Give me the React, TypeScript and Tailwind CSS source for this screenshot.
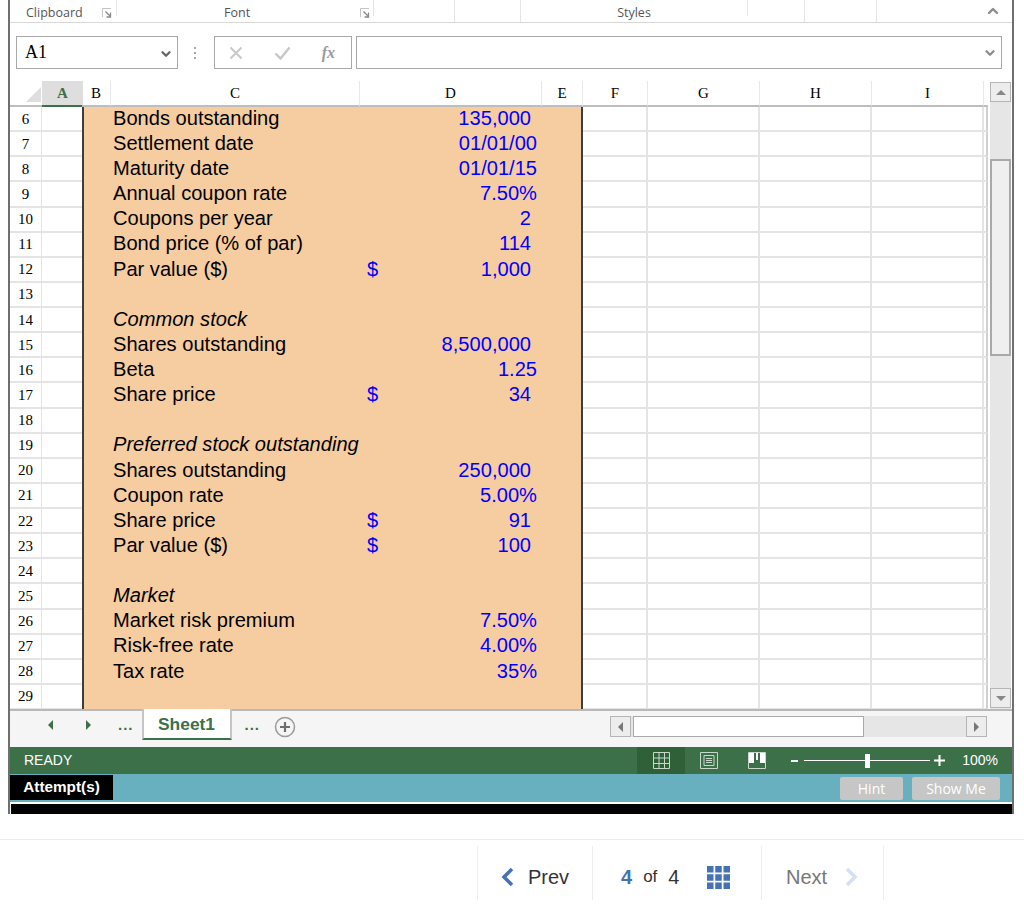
import { ChevronDown, ChevronUp } from "lucide-react";

type Row = {
  n: number;
  label?: string;
  italic?: boolean;
  value?: string;
  dollar?: boolean;
  flush?: boolean;
};

const rows: Row[] = [
  { n: 6, label: "Bonds outstanding", value: "135,000" },
  { n: 7, label: "Settlement date", value: "01/01/00", flush: true },
  { n: 8, label: "Maturity date", value: "01/01/15", flush: true },
  { n: 9, label: "Annual coupon rate", value: "7.50%", flush: true },
  { n: 10, label: "Coupons per year", value: "2" },
  { n: 11, label: "Bond price (% of par)", value: "114" },
  { n: 12, label: "Par value ($)", value: "1,000", dollar: true },
  { n: 13 },
  { n: 14, label: "Common stock", italic: true },
  { n: 15, label: "Shares outstanding", value: "8,500,000" },
  { n: 16, label: "Beta", value: "1.25", flush: true },
  { n: 17, label: "Share price", value: "34", dollar: true },
  { n: 18 },
  { n: 19, label: "Preferred stock outstanding", italic: true },
  { n: 20, label: "Shares outstanding", value: "250,000" },
  { n: 21, label: "Coupon rate", value: "5.00%", flush: true },
  { n: 22, label: "Share price", value: "91", dollar: true },
  { n: 23, label: "Par value ($)", value: "100", dollar: true },
  { n: 24 },
  { n: 25, label: "Market", italic: true },
  { n: 26, label: "Market risk premium", value: "7.50%", flush: true },
  { n: 27, label: "Risk-free rate", value: "4.00%", flush: true },
  { n: 28, label: "Tax rate", value: "35%", flush: true },
  { n: 29 },
];

const cols = "grid grid-cols-[32px_40px_29px_249px_182px_41px_65px_112px_112px_112px_4px]";
const serif = "font-['Liberation_Serif',serif]";
const openSans = "font-['Open_Sans',sans-serif]";

function Launcher() {
  return (
    <svg width="10" height="10" viewBox="0 0 10 10" className="shrink-0">
      <path d="M.5 9V.5H9" fill="none" stroke="#c4c4c4" strokeWidth="1" />
      <path d="M3.500 3.500L8 8M8.500 4.500v4.500H4.500" fill="none" stroke="#8a8a8a" strokeWidth="1.300" />
    </svg>
  );
}

function Triangle({ dir, color }: { dir: "up" | "down" | "left" | "right"; color: string }) {
  const points = {
    up: "0,6 5,1 10,6",
    down: "0,1 10,1 5,6",
    left: "6,0 6,10 1,5",
    right: "1,0 1,10 6,5",
  }[dir];
  const vertical = dir === "up" || dir === "down";
  return (
    <svg width={vertical ? 10 : 7} height={vertical ? 7 : 10} viewBox={vertical ? "0 0 10 7" : "0 0 7 10"}>
      <polygon points={points} fill={color} />
    </svg>
  );
}

function Ribbon() {
  return (
    <div className={`flex h-[23px] border-b border-[#d8d8d8] text-[12.500px] text-[#555] ${openSans}`}>
      <div className="mb-[6px] flex w-[107px] items-center border-r border-[#e4e4e4] pl-[16px]">
        <span className="mt-[10px]">Clipboard</span>
        <span className="ml-[19px] mt-[10px]"><Launcher /></span>
      </div>
      <div className="mb-[6px] flex w-[257px] items-center border-r border-[#e4e4e4] pl-[107px]">
        <span className="mt-[10px]">Font</span>
        <span className="ml-[110px] mt-[10px]"><Launcher /></span>
      </div>
      <div className="w-[81px] border-r border-[#e4e4e4]" />
      <div className="w-[66px] border-r border-[#e4e4e4]" />
      <div className="mb-[6px] flex w-[227px] items-center justify-center border-r border-[#e4e4e4]">
        <span className="mt-[10px]">Styles</span>
      </div>
      <div className="w-[57px] border-r border-[#e4e4e4]" />
      <div className="w-[72px] border-r border-[#e4e4e4]" />
      <div className="flex flex-1 items-center justify-end pr-[11px]">
        <ChevronUp size={16} strokeWidth={3.500} color="#8c8c8c" />
      </div>
    </div>
  );
}

function FormulaBar() {
  return (
    <div className="flex h-[58px] items-start pt-[13px] pl-[6px]">
      <div className={`flex h-[33px] w-[162px] items-center justify-between border border-[#a9a9a9] pl-[8px] pr-[4px] text-[18px] text-black ${serif}`}>
        <span>A1</span>
        <ChevronDown size={14} strokeWidth={4} color="#666" className="mt-[3px]" />
      </div>
      <div className="ml-[16px] mr-[18px] flex h-[33px] flex-col items-center justify-center gap-[3px]">
        <span className="h-[2px] w-[2px] bg-[#aaa]" />
        <span className="h-[2px] w-[2px] bg-[#aaa]" />
        <span className="h-[2px] w-[2px] bg-[#aaa]" />
      </div>
      <div className="flex h-[33px] w-[138px] items-center justify-between border border-[#a9a9a9] pl-[14px] pr-[16px]">
        <svg width="14" height="14" viewBox="0 0 14 14">
          <path d="M1.500 1.500l11 11M12.500 1.500l-11 11" stroke="#c8c8c8" strokeWidth="2" fill="none" />
        </svg>
        <svg width="17" height="14" viewBox="0 0 17 14">
          <path d="M1.500 7.500l5 5 9-11" stroke="#c8c8c8" strokeWidth="2.400" fill="none" />
        </svg>
        <span className={`text-[16px] font-bold italic text-[#9a9a9a] ${serif}`}>fx</span>
      </div>
      <div className="ml-[4px] flex h-[33px] w-[646px] items-center justify-end border border-[#a9a9a9] pr-[4px]">
        <ChevronDown size={14} strokeWidth={4} color="#8c8c8c" />
      </div>
    </div>
  );
}

function ColumnHeaders() {
  const heads = ["B", "C", "D", "E", "F", "G", "H", "I"];
  return (
    <div className={`${cols} h-[26px] w-[978px] ${serif} text-[15px] text-black`}>
      <div className="flex items-end justify-end border-b-2 border-[#bdbdbd] pb-[3px] pr-[1px]">
        <svg width="15" height="15" viewBox="0 0 15 15">
          <polygon points="15,0 15,15 0,15" fill="#dedede" />
        </svg>
      </div>
      <div className="mr-[-1px] flex items-center justify-center border-b-2 border-[#3c7049] bg-[#dedede] font-bold text-[#3c7049]">A</div>
      {heads.map((h) => (
        <div key={h} className="flex items-center justify-center border-b-2 border-[#bdbdbd] border-r border-r-[#e8e8e8]">
          {h}
        </div>
      ))}
      <div className="border-b-2 border-[#bdbdbd]" />
    </div>
  );
}

function SheetRow({ row }: { row: Row }) {
  const line = "border-b-2 border-[#e4e4e4]";
  return (
    <div className={`${cols} h-[25.136px] text-[20.100px] leading-[21.600px]`}>
      <div className={`flex items-center justify-center border-r border-[#c8c8c8] pt-[1.500px] text-[15px] text-black ${line} ${serif}`}>
        {row.n}
      </div>
      <div className={line} />
      <div className="border-l-2 border-l-[#3d3d3d] bg-[#f6cda0]" />
      <div className={`truncate bg-[#f6cda0] pl-[2px] pt-[0.800px] text-black ${row.italic ? "italic" : ""}`}>{row.label}</div>
      <div className="flex justify-between bg-[#f6cda0] pl-[7px] pt-[0.800px] text-[#0000ff]">
        <span>{row.dollar ? "$" : ""}</span>
        <span className={row.flush ? "pr-[5px]" : "pr-[11px]"}>{row.value}</span>
      </div>
      <div className="border-r-[2px] border-r-[#3d3d3d] bg-[#f6cda0]" />
      <div className={`border-r-2 border-r-[#e4e4e4] ${line}`} />
      <div className={`border-r-2 border-r-[#e4e4e4] ${line}`} />
      <div className={`border-r-2 border-r-[#e4e4e4] ${line}`} />
      <div className={`border-r-2 border-r-[#e4e4e4] ${line}`} />
      <div className={`border-r-2 border-r-[#d0d0d0] ${line}`} />
    </div>
  );
}

function VerticalScroll() {
  return (
    <div className="ml-[2px] mt-[1px] flex w-[21px] flex-col bg-[#e6e6e6]">
      <div className="flex h-[20px] items-center justify-center border border-[#b5b5b5] bg-[#ededed]">
        <Triangle dir="up" color="#888" />
      </div>
      <div className="mt-[57px] h-[197px] border-2 border-[#a9a9a9] bg-[#efefef]" />
      <div className="mt-auto mb-[1px] flex h-[20px] items-center justify-center border border-[#b5b5b5] bg-[#ededed]">
        <Triangle dir="down" color="#888" />
      </div>
    </div>
  );
}

function TabBar() {
  return (
    <div className="flex h-[38px] border-t-2 border-[#b9b9b9] bg-[#f5f5f5]">
      <div className="ml-[37px] mt-[9px] flex h-[10px]">
        <Triangle dir="left" color="#3c7049" />
        <span className="ml-[31px]"><Triangle dir="right" color="#3c7049" /></span>
      </div>
      <span className="ml-[26px] mt-[3px] text-[15px] font-bold tracking-[1px] text-[#3c7049]">...</span>
      <div className="ml-[8px] mt-[-2px] flex h-[31px] w-[90px] items-center justify-center border-x-2 border-b-2 border-x-[#c4c4c4] border-b-[#3c7049] bg-white pt-[1px] text-[17.400px] font-bold text-[#3c7049]">
        Sheet1
      </div>
      <span className="ml-[13px] mt-[3px] text-[15px] font-bold tracking-[1px] text-[#3c7049]">...</span>
      <svg width="22" height="22" viewBox="0 0 22 22" className="ml-[14px] mt-[5px]">
        <circle cx="11" cy="11" r="9.500" fill="none" stroke="#9a9a9a" strokeWidth="1.500" />
        <path d="M11 6v10M6 11h10" stroke="#6e6e6e" strokeWidth="2.200" />
      </svg>
      <div className="ml-[314px] mt-[5px] flex h-[21px] w-[377px] bg-[#e6e6e6]">
        <div className="flex w-[21px] items-center justify-center border border-[#b5b5b5] bg-[#ededed]">
          <Triangle dir="left" color="#777" />
        </div>
        <div className="ml-[2px] w-[231px] border border-[#a9a9a9] bg-white" />
        <div className="ml-auto flex w-[21px] items-center justify-center border border-[#b5b5b5] bg-[#ededed]">
          <Triangle dir="right" color="#777" />
        </div>
      </div>
    </div>
  );
}

function StatusBar() {
  return (
    <div className="flex h-[27px] items-center bg-[#3c7049] text-white">
      <span className="ml-[14px] text-[14px]">READY</span>
      <div className="ml-auto flex h-full items-center">
        <div className="flex h-full w-[48px] items-center justify-center bg-[#2f6038]">
          <svg width="17" height="17" viewBox="0 0 17 17">
            <path d="M.5.5h16v16H.5zM6 .5v16M11.500.5v16M.5 6h16M.5 11.500h16" fill="none" stroke="#c9d8cd" strokeWidth="1" />
          </svg>
        </div>
        <svg width="18" height="17" viewBox="0 0 18 17" className="ml-[15px]">
          <path d="M.5.5h17v16H.5z" fill="none" stroke="#c9d8cd" />
          <path d="M4 3.500h10v10H4zM6 6.500h6M6 8.500h6M6 10.500h6" fill="none" stroke="#c9d8cd" />
        </svg>
        <svg width="18" height="17" viewBox="0 0 18 17" className="ml-[30px]">
          <path d="M.5.500h17v16H.5z" fill="none" stroke="#c9d8cd" />
          <path d="M1 1h5v10H1zM8 1h2v7H8zM12 1h5v10h-5z" fill="#fff" />
        </svg>
        <span className="ml-[25px] h-[2px] w-[7px] bg-white" />
        <div className="ml-[6px] flex h-[12px] w-[126px] items-center">
          <span className="h-[1px] w-[61px] bg-white" />
          <span className="h-[14px] w-[5px] bg-white" />
          <span className="h-[1px] w-[60px] bg-white" />
        </div>
        <svg width="11" height="11" viewBox="0 0 11 11" className="ml-[4px]">
          <path d="M5.500 0v11M0 5.500h11" stroke="#fff" strokeWidth="2" />
        </svg>
        <span className="ml-[17px] mr-[14px] text-[14px]">100%</span>
      </div>
    </div>
  );
}

function AttemptBar() {
  return (
    <div className="flex h-[28px] bg-[#68b0c0] pt-[1px]">
      <div className="flex h-[25px] w-[103px] items-center justify-center bg-black text-[15.300px] font-bold text-white">
        Attempt(s)
      </div>
      <div className={`ml-auto mt-[2px] flex h-[23px] gap-[9px] pr-[12px] text-[14px] text-white ${openSans}`}>
        <span className="flex w-[63px] items-center justify-center rounded-[2px] bg-[#c6c6c6]">Hint</span>
        <span className="flex w-[88px] items-center justify-center rounded-[2px] bg-[#c6c6c6]">Show Me</span>
      </div>
    </div>
  );
}

function Chevron({ flip, color }: { flip?: boolean; color: string }) {
  return (
    <svg width="14" height="20" viewBox="0 0 14 20" className="shrink-0">
      <path d={flip ? "M3 2l8 8-8 8" : "M11 2l-8 8 8 8"} fill="none" stroke={color} strokeWidth="3.500" />
    </svg>
  );
}

function Pager() {
  return (
    <div className="mt-[25px] border-t border-[#eeeeee] pt-[6px]">
      <div className="ml-[477px] flex h-[54px] w-[407px] text-[20px]">
        <div className="flex h-full w-[116px] items-center border-x border-[#eeeeee] pl-[23px] pt-[8px] text-[#333]">
          <Chevron color="#4472b5" />
          <span className="ml-[13px]">Prev</span>
        </div>
        <div className="flex h-full w-[168px] items-center pl-[28px] pt-[8px] text-[#333]">
          <span className="font-bold text-[#4472b5]">4</span>
          <span className="ml-[11px] text-[17px]">of</span>
          <span className="ml-[11px]">4</span>
          <svg width="23" height="23" viewBox="0 0 23 23" className="ml-[28px]">
            <path
              d="M0 0h6.500v6.500H0zM8.250 0h6.500v6.500h-6.500zM16.500 0H23v6.500h-6.500zM0 8.250h6.500v6.500H0zM8.250 8.250h6.500v6.500h-6.500zM16.500 8.250H23v6.500h-6.500zM0 16.500h6.500V23H0zM8.250 16.500h6.500V23h-6.500zM16.500 16.500H23V23h-6.500z"
              fill="#4472b5"
            />
          </svg>
        </div>
        <div className="flex h-full w-[123px] items-center border-x border-[#eeeeee] pl-[24px] pt-[8px] text-[#777]">
          <span>Next</span>
          <span className="ml-[17px]"><Chevron flip color="#d5e0f0" /></span>
        </div>
      </div>
    </div>
  );
}

export default function App() {
  return (
    <div className="h-[913px] w-[1024px] overflow-hidden bg-white font-['Liberation_Sans',Arial,sans-serif]">
      <div className="ml-[8px] w-[1006px] border-x-2 border-[#6f6f6f]">
        <Ribbon />
        <FormulaBar />
        <div className="flex h-[628px] overflow-hidden">
          <div className="w-[978px]">
            <ColumnHeaders />
            {rows.map((row) => (
              <SheetRow key={row.n} row={row} />
            ))}
          </div>
          <VerticalScroll />
        </div>
        <TabBar />
        <StatusBar />
        <AttemptBar />
        <div className="h-[12px] border-t-2 border-l border-white bg-black" />
      </div>
      <Pager />
    </div>
  );
}
